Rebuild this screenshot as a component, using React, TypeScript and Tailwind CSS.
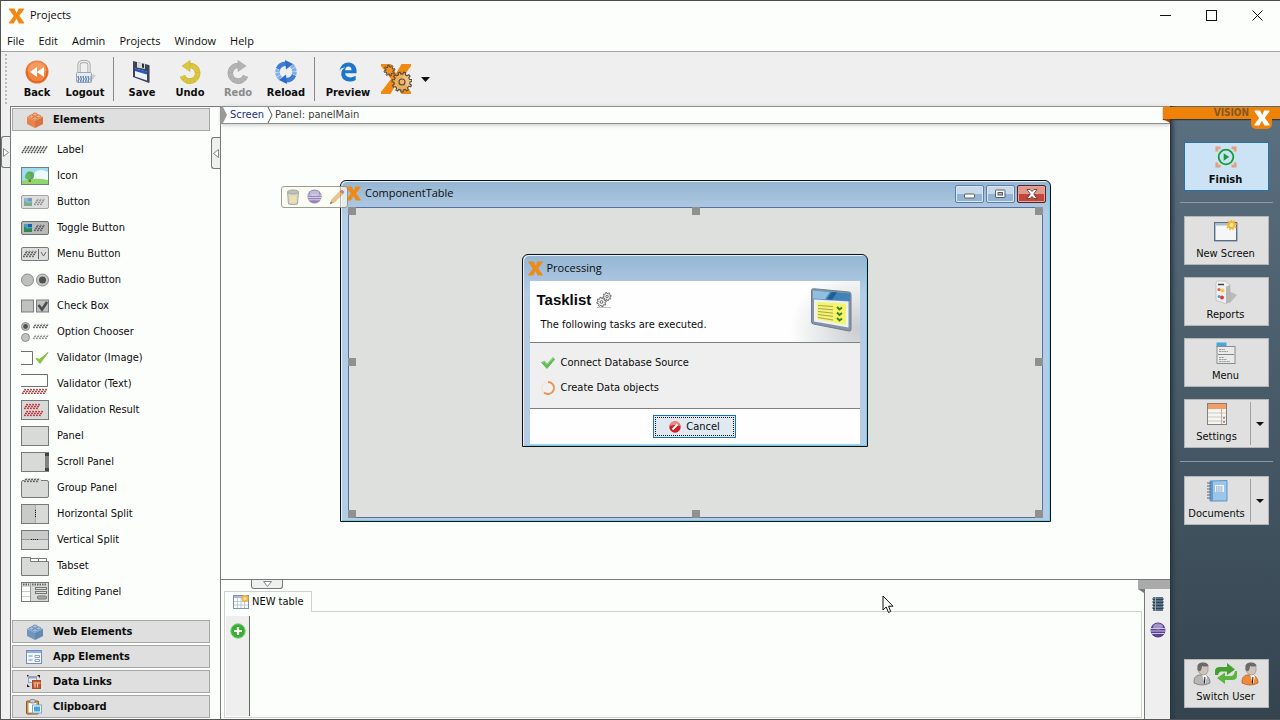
import React from "react";

type IconProps = { className?: string };

function XLogo({ className = "" }: IconProps) {
  return (
    <svg viewBox="0 0 16 16" className={className} aria-hidden="true">
      <path
        d="M0.5 0.5H6L8.200 5L10.200 0.500H15.500V1.500L10.800 7.800L15.600 14.500V15.500H10.400L7.900 10.700L5.300 15.500H0.400V14.500L5.200 8L0.500 1.500Z"
        fill="currentColor"
      />
    </svg>
  );
}

function Hatch({ x, y, w, h = 4, color = "#555" }: { x: number; y: number; w: number; h?: number; color?: string }) {
  const count = Math.floor((w - h * 0.6) / 3) + 1;
  return (
    <g stroke={color} strokeWidth="1.6" strokeDasharray="1.6 0.5">
      {Array.from({ length: count }, (_, i) => (
        <line key={i} x1={x + i * 3 + 0.5} y1={y + h} x2={x + i * 3 + 0.5 + h * 0.6} y2={y} />
      ))}
    </g>
  );
}

function Box() {
  return <rect x="0.5" y="0.5" width="27" height="19" fill="#d8dad8" stroke="#777a7a" />;
}

function Picture({ faded = false }: { faded?: boolean }) {
  return (
    <g opacity={faded ? 0.55 : 1}>
      <rect x="3" y="6" width="8" height="8" fill="#4a9bd0" />
      <path d="M3 14V8l3 3 5-1v4z" fill="#2d8a4a" />
      <rect x="7" y="6" width="4" height="3" fill="#245f9c" />
    </g>
  );
}

const elements: { name: string; art: React.ReactNode }[] = [
  { name: "Label", art: <Hatch x={0.5} y={6} w={27} h={7} /> },
  {
    name: "Icon",
    art: (
      <>
        <rect x="0.5" y="1.5" width="27" height="17" fill="#9edcf0" stroke="#6d7f7f" />
        <path d="M14 6q5-4 13 0v8H12z" fill="#eef9fb" />
        <path d="M1 15q12-4 26-1v4H1z" fill="#8fd66c" />
        <path d="M8 10h2v6H7.500z" fill="#8a6a35" />
        <circle cx="9" cy="9.500" r="4" fill="#5bab52" />
        <circle cx="7" cy="10.500" r="3" fill="#66b75c" />
      </>
    ),
  },
  {
    name: "Button",
    art: (
      <>
        <rect x="0.5" y="3.5" width="27" height="13" rx="1.500" fill="#dcdddc" stroke="#a2a5a4" />
        <Picture faded />
        <Hatch x={13} y={7} w={12} h={6} color="#8c8c8c" />
      </>
    ),
  },
  {
    name: "Toggle Button",
    art: (
      <>
        <rect x="0.5" y="3.5" width="27" height="13" rx="1.500" fill="#b9bbba" stroke="#6f7271" />
        <Picture />
        <Hatch x={13} y={7} w={12} h={6} />
      </>
    ),
  },
  {
    name: "Menu Button",
    art: (
      <>
        <rect x="0.5" y="3.5" width="27" height="13" rx="1.500" fill="#dcdddc" stroke="#777a79" />
        <Hatch x={2} y={7} w={13} h={6} />
        <path d="M17.500 5v10" stroke="#666" />
        <path d="M20 8l2.500 4L25 8" fill="none" stroke="#666" />
      </>
    ),
  },
  {
    name: "Radio Button",
    art: (
      <>
        <circle cx="6.500" cy="10" r="6" fill="#bdbfbe" stroke="#8a8d8c" />
        <circle cx="21.500" cy="10" r="6" fill="#c5c7c6" stroke="#8a8d8c" />
        <circle cx="21.500" cy="10" r="3.500" fill="#505251" />
      </>
    ),
  },
  {
    name: "Check Box",
    art: (
      <>
        <rect x="0.5" y="4" width="12" height="12" fill="#bfc1c0" stroke="#7b7e7d" />
        <rect x="15.500" y="4" width="12" height="12" fill="#bfc1c0" stroke="#7b7e7d" />
        <path d="M17.500 9l3.500 4.500L26 6" fill="none" stroke="#4c4e4d" strokeWidth="2.600" />
      </>
    ),
  },
  {
    name: "Option Chooser",
    art: (
      <>
        <circle cx="4.500" cy="4.500" r="4" fill="#c2c4c3" stroke="#8a8d8c" />
        <circle cx="4.500" cy="4.500" r="2.400" fill="#505251" />
        <circle cx="4.500" cy="15.500" r="4" fill="#c2c4c3" stroke="#8a8d8c" />
        <Hatch x={12} y={2} w={15} h={4} />
        <Hatch x={12} y={13} w={15} h={4} color="#888" />
      </>
    ),
  },
  {
    name: "Validator (Image)",
    art: (
      <>
        <path d="M0 3.500h11.500v13H0" fill="none" stroke="#6c6f6e" />
        <path d="M15 10.500l4 5 8-11-8.200 6.800z" fill="#86c440" stroke="#86c440" />
      </>
    ),
  },
  {
    name: "Validator (Text)",
    art: (
      <>
        <path d="M0 0.500h26.500v12H0" fill="none" stroke="#6c6f6e" />
        <Hatch x={1} y={15} w={25} h={5} color="#a3282a" />
      </>
    ),
  },
  {
    name: "Validation Result",
    art: (
      <>
        <Box />
        <Hatch x={3} y={4} w={17} h={5} color="#c22429" />
        <Hatch x={3} y={11} w={20} h={5} color="#c22429" />
      </>
    ),
  },
  { name: "Panel", art: <Box /> },
  {
    name: "Scroll Panel",
    art: (
      <>
        <Box />
        <rect x="24" y="0" width="4" height="20" fill="#808281" />
        <rect x="24" y="1" width="4" height="3" fill="#414342" />
        <rect x="24" y="16" width="4" height="3" fill="#414342" />
      </>
    ),
  },
  {
    name: "Group Panel",
    art: (
      <>
        <rect x="0.5" y="2.500" width="27" height="17" rx="1.500" fill="#d8dad8" stroke="#777a7a" />
        <rect x="3" y="1" width="17" height="4" fill="#d8dad8" />
        <Hatch x={3} y={0} w={17} h={4} />
      </>
    ),
  },
  {
    name: "Horizontal Split",
    art: (
      <>
        <Box />
        <rect x="1" y="1" width="13" height="18" fill="#c9cbca" />
        <path d="M14.500 1v18" stroke="#aaa" />
        <path d="M14.500 6v8" stroke="#222" strokeDasharray="1 1" />
      </>
    ),
  },
  {
    name: "Vertical Split",
    art: (
      <>
        <Box />
        <rect x="1" y="1" width="26" height="8" fill="#c9cbca" />
        <path d="M1 9.500h26" stroke="#999" />
        <path d="M10 9.500h8" stroke="#222" strokeDasharray="1 1" />
      </>
    ),
  },
  {
    name: "Tabset",
    art: (
      <>
        <path d="M0.500 1.500h9v4h18v14H0.500z" fill="#d8dad8" stroke="#777a7a" />
        <path d="M9.500 2.500h8v3M17.500 2.500h8v3" fill="none" stroke="#777a7a" />
      </>
    ),
  },
  {
    name: "Editing Panel",
    art: (
      <>
        <Box />
        <rect x="1" y="5" width="8" height="14" fill="#fff" />
        <path d="M1 9.500h8M1 14.500h8" stroke="#ccc" />
        <path d="M2 2.500h6M11 2.500h15" stroke="#666" strokeWidth="2" strokeDasharray="1.500 1" />
        <rect x="14.500" y="5.500" width="11" height="2" fill="#ddd" stroke="#777" />
        <rect x="14.500" y="9.500" width="11" height="2" fill="#ddd" stroke="#777" />
        <rect x="16.500" y="14" width="9" height="3" rx="1" fill="#aaa" stroke="#777" />
        <path d="M9.500 1v18" stroke="#999" />
      </>
    ),
  },
];

function Brick({ light, mid, dark }: { light: string; mid: string; dark: string }) {
  return (
    <svg viewBox="0 0 18 16" className="h-4 w-[18px]" aria-hidden="true">
      <path d="M1 5l8-4 8 4v7l-8 4-8-4z" fill={mid} />
      <path d="M1 5l8-4 8 4-8 4z" fill={light} />
      <path d="M9 9l8-4v7l-8 4z" fill={dark} opacity="0.6" />
      <ellipse cx="5.500" cy="4.500" rx="2.300" ry="1.500" fill={light} stroke={dark} strokeWidth="0.700" />
      <ellipse cx="12.500" cy="4.500" rx="2.300" ry="1.500" fill={light} stroke={dark} strokeWidth="0.700" />
      <ellipse cx="9" cy="2.500" rx="2.300" ry="1.500" fill={light} stroke={dark} strokeWidth="0.700" />
      <ellipse cx="9" cy="6.500" rx="2.300" ry="1.500" fill={light} stroke={dark} strokeWidth="0.700" />
    </svg>
  );
}

function AppFormIcon() {
  return (
    <svg viewBox="0 0 16 14" className="h-[14px] w-4" aria-hidden="true">
      <rect x="0.5" y="0.5" width="15" height="13" fill="#f3f7fc" stroke="#6d8fbd" />
      <rect x="1" y="1" width="14" height="2" fill="#8fb0dc" />
      <path d="M2.500 6h4M2.500 10h4" stroke="#6d8fbd" />
      <path d="M9 5.500h4.500v2H9zM9 9.500h4.500v2H9z" fill="#fff" stroke="#6d8fbd" strokeWidth="0.800" />
    </svg>
  );
}

function DataLinkIcon() {
  return (
    <svg viewBox="0 0 16 14" className="h-[14px] w-4" aria-hidden="true">
      <rect x="2.500" y="1.500" width="8" height="6" fill="#e6eef7" stroke="#8fa5bd" />
      <path d="M2 2.500h9" stroke="#8fa5bd" strokeWidth="2" />
      <rect x="6.500" y="5.500" width="8" height="8" fill="#c9562e" stroke="#b04a26" />
      <path d="M9 8.500v4M11.500 8.500v4M7.500 8h7" stroke="#f6d5c4" />
      <path d="M1 0h2L1 2zM11 0h3v3zM1 9v3h3z" fill="#222" />
    </svg>
  );
}

function ClipboardIcon() {
  return (
    <svg viewBox="0 0 16 16" className="h-4 w-4" aria-hidden="true">
      <rect x="0.5" y="2" width="12" height="13" rx="1" fill="#c98f47" stroke="#8b5a22" />
      <rect x="2.500" y="4" width="8" height="9.500" fill="#fff" />
      <rect x="4" y="0.500" width="5" height="3.500" rx="1" fill="#c8cdd2" stroke="#7b8087" strokeWidth="0.800" />
      <rect x="6.500" y="6" width="9" height="8" fill="#fff" stroke="#7ca6c9" />
      <rect x="8" y="7.500" width="6" height="5" fill="#42a6dd" />
    </svg>
  );
}

function AccordionHeader({ icon, label }: { icon: React.ReactNode; label: string }) {
  return (
    <button
      type="button"
      className="flex h-[23px] w-full shrink-0 items-center border border-[#a6a7a6] bg-[#dedfde] pl-[13px] text-left text-[11px] font-bold leading-[14px]"
    >
      <span className="flex w-[27px] items-center">{icon}</span>
      {label}
    </button>
  );
}

function BackIcon() {
  return (
    <svg viewBox="0 0 24 24" className="h-6 w-6" aria-hidden="true">
      <circle cx="12" cy="12" r="11.500" fill="#ea7430" />
      <circle cx="12" cy="12" r="10" fill="#f0863f" stroke="#d65d1e" />
      <path d="M2 11a10 10 0 0 1 20 0q-10 4-20 0z" fill="#f6a871" opacity="0.6" />
      <path d="M12 7v10l-7-5zM19 7v10l-7-5z" fill="#fff" />
    </svg>
  );
}

function LockIcon() {
  return (
    <svg viewBox="0 0 24 24" className="h-6 w-6" aria-hidden="true">
      <path d="M15 14l8 1-5 7h-5z" fill="#ccc" />
      <path d="M6 13V4.500q0-3 5-3t5 3V13" fill="none" stroke="#999" strokeWidth="3" />
      <path d="M6 13V4.500q0-3 5-3t5 3V13" fill="none" stroke="#ededed" strokeWidth="1.500" />
      <rect x="3.500" y="12.500" width="15" height="10" rx="1" fill="#e6ebf0" stroke="#9aa5b0" />
      <path d="M4.500 17h13M5 19h13M4.500 21h13" stroke="#466fa3" strokeWidth="1.500" strokeDasharray="1.500 1" />
    </svg>
  );
}

function SaveIcon() {
  return (
    <svg viewBox="0 0 24 24" className="h-6 w-6" aria-hidden="true">
      <path d="M3 1l16 4v18L3 17z" fill="#3d4454" />
      <path d="M7 2l8 2v5L7 7.500z" fill="#d7dbe0" />
      <path d="M12 3.500l2 .5v4l-2-.5z" fill="#2a2e38" />
      <path d="M5 8.500l12 3v9l-12-4z" fill="#eef3fb" />
      <path d="M5 8.500l12 3v3l-12-3.500z" fill="#2156c8" />
      <path d="M19 5l1 .5v17l-1 .5z" fill="#8d929c" />
    </svg>
  );
}

function TurnIcon({ color, edge, flip = false }: { color: string; edge: string; flip?: boolean }) {
  return (
    <svg viewBox="0 0 24 24" className="h-6 w-6" aria-hidden="true">
      <g transform={flip ? "translate(24 0) scale(-1 1)" : undefined}>
        <path d="M11 5.500a7.800 7.800 0 1 1-6.500 10.500" fill="none" stroke={edge} strokeWidth="5.600" />
        <path
          d="M11 5.500a7.800 7.800 0 1 1-6.500 10.500"
          fill="none"
          stroke={color}
          strokeWidth="4.600"
          strokeDasharray="12 0.500 4 0.500 3.500 0.500 3 0.500 3 0.500 3 0.500"
        />
        <path d="M4 6L12 0.500v11z" fill={color} stroke={edge} strokeWidth="0.600" />
      </g>
    </svg>
  );
}

function ReloadIcon() {
  return (
    <svg viewBox="0 0 24 24" className="h-6 w-6" aria-hidden="true">
      <path d="M3.900 9A8.600 8.600 0 0 1 12 3.800" fill="none" stroke="#3f7ed8" strokeWidth="4.500" />
      <path d="M20.100 15A8.600 8.600 0 0 1 12 20.200" fill="none" stroke="#3f7ed8" strokeWidth="4.500" />
      <path d="M17.500 5.500a8.600 8.600 0 0 1 2.600 9" fill="none" stroke="#7fb0ee" strokeWidth="4.500" strokeDasharray="3 0.500" />
      <path d="M6.500 18.500a8.600 8.600 0 0 1-2.600-9" fill="none" stroke="#7fb0ee" strokeWidth="4.500" strokeDasharray="3 0.500" />
      <path d="M11 0l8 4-7 5.500z" fill="#2f6bc8" />
      <path d="M13 24l-8-4 7-5.500z" fill="#2f6bc8" />
    </svg>
  );
}

function BrowserIcon() {
  return (
    <svg viewBox="0 0 20 22" className="h-5 w-[18px]" aria-hidden="true">
      <path
        d="M0.500 9.500C2 3.500 5.500 0.500 10.500 0.500c5.500 0 9 4 9 9.500v2.500H6.800c.2 3 2.600 4.500 5.700 4.500 2.300 0 4.500-.7 6-1.700v4.500c-2 1.100-4.500 1.700-7 1.700-5.700 0-9-3.700-9-8.500 0-3.200 1.600-5.900 4.700-7.300C3.900 6.200 1.900 7.200.5 9.500zM6.900 9h7c0-2.600-1.200-4-3.400-4S7.100 6.500 6.900 9z"
        fill="#1d76cc"
      />
    </svg>
  );
}

function gearPath(cx: number, cy: number, outer: number, inner: number, teeth: number) {
  const points: string[] = [];
  for (let i = 0; i < teeth; i++) {
    const start = (i / teeth) * Math.PI * 2;
    const step = (Math.PI * 2) / teeth;
    const corners: [number, number][] = [
      [inner, 0],
      [inner, 0.45],
      [outer, 0.55],
      [outer, 0.9],
    ];
    corners.forEach(([radius, part]) => {
      const angle = start + step * part;
      points.push(`${(cx + radius * Math.cos(angle)).toFixed(2)} ${(cy + radius * Math.sin(angle)).toFixed(2)}`);
    });
  }
  return `M${points.join("L")}Z`;
}

function GearLogo() {
  return (
    <svg viewBox="0 0 32 32" className="h-8 w-8" aria-hidden="true">
      <path d="M1 1h10l5 9.500L21.500 1H31v2l-9.500 13L31 29v2H21.500l-5.500-9.500L10.500 31H1v-2l10-13L1 3z" fill="#f08a14" />
      <g stroke="#4f4a42" fill="#f0b56a" fillOpacity="0.8">
        <path d={gearPath(22, 19, 10, 8, 11)} strokeWidth="1.100" />
        <circle cx="22" cy="19" r="3" strokeWidth="1.100" />
        <path d={gearPath(9.500, 7.500, 5.500, 3.600, 8)} fillOpacity="0.2" />
      </g>
    </svg>
  );
}

function ToolButton({ label, icon, disabled = false }: { label: string; icon: React.ReactNode; disabled?: boolean }) {
  return (
    <button
      type="button"
      disabled={disabled}
      className="flex w-12 shrink-0 flex-col items-center gap-0.5 whitespace-nowrap pt-px text-[11px] font-bold leading-[14px] disabled:text-[#8b8b8b]"
    >
      <span className="flex h-6 items-center">{icon}</span>
      {label}
    </button>
  );
}

function Separator() {
  return <span className="mx-1 h-11 w-px shrink-0 bg-[#888a89]" />;
}

function TitleBar() {
  return (
    <header className="flex h-[30px] shrink-0 items-center border-t border-[#4b4b4b] pl-[7px] font-['Open_Sans','Noto_Sans',sans-serif] text-[11px]">
      <XLogo className="h-4 w-[17px] text-[#f08a14]" />
      <h1 className="ml-[5px] grow">Projects</h1>
      <button type="button" aria-label="Minimize" className="flex w-[46px] justify-center">
        <svg viewBox="0 0 11 11" className="h-[11px] w-[11px]"><path d="M0 5.500h11" stroke="#111" /></svg>
      </button>
      <button type="button" aria-label="Maximize" className="flex w-[46px] justify-center">
        <svg viewBox="0 0 11 11" className="h-[11px] w-[11px]"><rect x="0.500" y="0.500" width="10" height="10" fill="none" stroke="#111" /></svg>
      </button>
      <button type="button" aria-label="Close" className="flex w-[46px] justify-center">
        <svg viewBox="0 0 11 11" className="h-[11px] w-[11px]"><path d="M0.500 0.500l10 10M10.500 0.500l-10 10" stroke="#111" /></svg>
      </button>
    </header>
  );
}

function MenuBar() {
  return (
    <nav className="flex h-[22px] shrink-0 items-center gap-3.5 border-b border-[#a3a5a4] pl-1.5 pt-0.5 font-['Open_Sans','Noto_Sans',sans-serif] text-[11px]">
      {["File", "Edit", "Admin", "Projects", "Window", "Help"].map((m) => (
        <button key={m} type="button">{m}</button>
      ))}
    </nav>
  );
}

function Toolbar() {
  return (
    <div role="toolbar" className="flex h-[54px] shrink-0 items-center bg-[#eeefee] pl-1">
      <span className="mr-1.5 h-[50px] border-l-2 border-dotted border-[#bbb]" />
      <ToolButton label="Back" icon={<BackIcon />} />
      <ToolButton label="Logout" icon={<LockIcon />} />
      <Separator />
      <ToolButton label="Save" icon={<SaveIcon />} />
      <ToolButton label="Undo" icon={<TurnIcon color="#dcc63c" edge="#c4ae38" />} />
      <ToolButton label="Redo" icon={<TurnIcon color="#b3b4b3" edge="#a2a3a2" flip />} disabled />
      <ToolButton label="Reload" icon={<ReloadIcon />} />
      <Separator />
      <span className="w-[5px]" />
      <ToolButton label="Preview" icon={<BrowserIcon />} />
      <button type="button" aria-label="Application" className="ml-2"><GearLogo /></button>
      <button type="button" aria-label="Application options" className="ml-[9px]">
        <svg viewBox="0 0 9 5" className="h-[5px] w-[9px]"><path d="M0 0h9L4.500 5z" fill="#111" /></svg>
      </button>
    </div>
  );
}

function ElementsPanel() {
  return (
    <aside className="relative flex w-[211px] shrink-0 flex-col border-x border-t border-[#777978] pl-px pr-2.5 pt-px">
      <AccordionHeader icon={<Brick light="#f5b183" mid="#e8834b" dark="#cf6a35" />} label="Elements" />
      <ul className="grow pl-[9px] pt-1.5">
        {elements.map((e) => (
          <li key={e.name}>
            <button type="button" className="flex h-[26px] items-center gap-2 text-[11px] leading-[14px]">
              <svg viewBox="0 0 28 20" className="h-5 w-7" aria-hidden="true">{e.art}</svg>
              {e.name}
            </button>
          </li>
        ))}
      </ul>
      <div className="flex flex-col gap-0.5 pb-px">
        <AccordionHeader icon={<Brick light="#a9c3df" mid="#7396bd" dark="#5c80aa" />} label="Web Elements" />
        <AccordionHeader icon={<AppFormIcon />} label="App Elements" />
        <AccordionHeader icon={<DataLinkIcon />} label="Data Links" />
        <AccordionHeader icon={<ClipboardIcon />} label="Clipboard" />
      </div>
      <button
        type="button"
        aria-label="Collapse elements"
        className="absolute right-0 top-[30px] flex h-8 w-[9px] items-center justify-center rounded-l-[3px] border border-r-0 border-[#777978] bg-[#eeefee]"
      >
        <svg viewBox="0 0 6 9" className="h-[9px] w-1.5"><path d="M5.500 0.500v8L0.500 4.500z" fill="#fff" stroke="#888" /></svg>
      </button>
    </aside>
  );
}

function Breadcrumb() {
  return (
    <nav className="relative z-10 flex h-[18px] shrink-0 items-center border-y border-[#8e908f] bg-[#fcfefc] text-[11px] leading-[14px] text-[#3c3c3c] shadow-[0_1px_4px_#c4c4c4]">
      <svg viewBox="0 0 6 16" className="h-4 w-1.5" aria-hidden="true"><path d="M0 0h2l4 8-4 8H0z" fill="#999" /></svg>
      <a href="#screen" className="ml-[3px] text-[#1c2f80]">Screen</a>
      <svg viewBox="0 0 6 16" className="ml-[3px] mr-0.5 h-4 w-1.5" aria-hidden="true"><path d="M1 0l4 8-4 8" fill="none" stroke="#555" /></svg>
      <span>Panel: panelMain</span>
    </nav>
  );
}

function SphereIcon({ className = "" }: IconProps) {
  return (
    <svg viewBox="0 0 16 16" className={className} aria-hidden="true">
      <circle cx="8" cy="8" r="7.500" fill="#5b4090" />
      <ellipse cx="8" cy="4.500" rx="5" ry="3" fill="#a493c8" />
      <path d="M1 6.500h14M0.500 9h15M1.500 11.500h13" stroke="#cfc5e6" strokeWidth="1" />
    </svg>
  );
}

function SelectionTools() {
  return (
    <div className="absolute -left-[60px] top-[5px] flex h-[22px] w-[67px] items-center gap-[7px] rounded-[3px] border border-[#8f9483] bg-[#fcfdf3]/80 px-1 opacity-90">
      <button type="button" aria-label="Delete" className="opacity-80">
        <svg viewBox="0 0 14 16" className="h-4 w-3.5">
          <path d="M1.500 3h11l-1 12q-4.500 1.500-9 0z" fill="#c9cac0" stroke="#888a80" />
          <rect x="4" y="6.500" width="6" height="7" fill="#ecd48c" />
          <ellipse cx="7" cy="3" rx="5.500" ry="2" fill="#a9aba0" stroke="#888a80" />
        </svg>
      </button>
      <button type="button" aria-label="Event" className="opacity-70"><SphereIcon className="h-[15px] w-[15px]" /></button>
      <button type="button" aria-label="Edit" className="opacity-80">
        <svg viewBox="0 0 16 16" className="h-4 w-4">
          <path d="M1 15l2-4.500L12 1.500l2.500 2.500L5.500 13z" fill="#e8b45c" stroke="#b98840" strokeWidth="0.700" />
          <path d="M11 2.500l2-2 2.500 2.500-2 2z" fill="#d65548" />
          <path d="M1 15l1-2.500L3.500 14z" fill="#444" />
        </svg>
      </button>
    </div>
  );
}

function WindowControls() {
  const base = "flex h-[18px] w-[29px] items-center justify-center rounded-[2px] border border-[#5f7fa3] inset-shadow-[0_0_0_1px_#d8e6f3]";
  const blue = "bg-linear-to-b from-[#c6daec] from-50% to-[#94b4d3] to-50%";
  return (
    <div className="-mr-[3px] ml-auto flex gap-0.5 pt-px">
      <button type="button" aria-label="Minimize window" className={`${base} ${blue}`}>
        <svg viewBox="0 0 11 12" className="h-3 w-[11px]"><rect x="0.500" y="6" width="10" height="4" rx="0.500" fill="#fff" stroke="#5a5f67" /></svg>
      </button>
      <button type="button" aria-label="Maximize window" className={`${base} ${blue}`}>
        <svg viewBox="0 0 11 10" className="h-2.5 w-[11px]">
          <rect x="0.500" y="1" width="9.500" height="7.500" rx="0.500" fill="#fff" stroke="#5a5f67" />
          <rect x="3" y="3.500" width="4.500" height="2.500" fill="#9fbad5" stroke="#5a5f67" />
        </svg>
      </button>
      <button
        type="button"
        aria-label="Close window"
        className="flex h-[18px] w-[29px] items-center justify-center rounded-[2px] border border-[#54202a] bg-linear-to-b from-[#e09a8c] from-50% to-[#c0473a] to-50% inset-shadow-[0_0_0_1px_#e3a79c]"
      >
        <svg viewBox="0 0 12 10" className="h-2.5 w-3">
          <path d="M1 0.500h3l2 2 2-2h3L7.700 5 11 9.500H8L6 7.500l-2 2H1L4.300 5z" fill="#fff" stroke="#5a3030" strokeWidth="0.800" />
        </svg>
      </button>
    </div>
  );
}

const handle = "absolute h-2 w-2 bg-[#8f908f]";

function ComponentWindow() {
  return (
    <section className="relative flex h-[342px] w-[711px] flex-col rounded-t-[6px] border border-[#111] bg-linear-to-b from-[#94b5d2] to-[#b4cde6] to-10% px-[7px] pb-[3px] shadow-[inset_1px_1px_0_#e4f0fa,inset_-1px_-1px_0_#6fd0ea]">
      <div className="flex h-[25px] shrink-0 items-center text-[11px]">
        <XLogo className="-ml-0.5 h-[15px] w-[15px] text-[#f08a14]" />
        <h2 className="ml-1 font-['Open_Sans','Noto_Sans',sans-serif]">ComponentTable</h2>
        <WindowControls />
      </div>
      <div className="relative mt-px grow border border-[#5a6ea0] bg-[#dee0de]">
        <span className={`${handle} -left-px -top-px`} />
        <span className={`${handle} -top-px left-1/2 -translate-x-1/2`} />
        <span className={`${handle} -right-px -top-px`} />
        <span className={`${handle} -left-px top-1/2 -translate-y-1/2`} />
        <span className={`${handle} -right-px top-1/2 -translate-y-1/2`} />
        <span className={`${handle} -bottom-px -left-px`} />
        <span className={`${handle} -bottom-px left-1/2 -translate-x-1/2`} />
        <span className={`${handle} -bottom-px -right-px`} />
      </div>
      <SelectionTools />
    </section>
  );
}

function TaskArt() {
  return (
    <svg viewBox="0 0 44 48" className="h-12 w-11" aria-hidden="true">
      <path d="M1.500 3.500q0-2 2-1.800L39 5q2 .3 2 2.200v35q0 2.300-2 1.800L3.500 37q-2-.4-2-2z" fill="#8494a4" stroke="#6f7f90" />
      <path d="M4 12.500l34.500 2v26L4 34.500z" fill="#eef2f2" />
      <path d="M3 3.500l37 3v7.500L3 11.500z" fill="#3f83b9" />
      <path d="M3 3.500l17 1.400-5 7.400-12-.8z" fill="#8fc0e2" />
      <path d="M22 5l5 .5-5 7.200-5-.4z" fill="#1f5f98" />
      <path d="M7 15l29 1.500V38L7 32z" fill="#f5f46a" />
      <path d="M8 18.500l15 1M8 21.500l15 1.300M8 24.500l15 1.600M8 27.500l15 1.900M8 30.500l15 2.500" stroke="#a8a259" />
      <path d="M27 20l2.500 2.500L32 20.500M27 25.500l2.500 2.500 2.500-2M27 31l2.500 2.500 2.500-2" fill="none" stroke="#3c7d28" strokeWidth="1.800" />
    </svg>
  );
}

function ProcessingDialog() {
  return (
    <section
      role="dialog"
      aria-labelledby="processing-title"
      className="flex w-[346px] flex-col rounded-t-[6px] border border-[#111] bg-linear-to-b from-[#94b5d2] to-[#b4cde6] to-20% px-[7px] pb-0.5 shadow-[inset_1px_1px_0_#e4f0fa,inset_-1px_-1px_0_#6fd0ea]"
    >
      <div className="flex h-[26px] items-center text-[11px]">
        <XLogo className="-ml-0.5 h-[15px] w-[15px] text-[#f08a14]" />
        <h2 id="processing-title" className="ml-1 font-['Open_Sans','Noto_Sans',sans-serif]">Processing</h2>
      </div>
      <div className="flex h-[61px] justify-between bg-[#fdfefd] bg-[radial-gradient(ellipse_70px_60px_at_100%_80%,#c9ccd0,#fdfefd)]">
        <div className="pl-[7px] pt-2">
          <h3 className="flex items-center gap-[5px] font-['Liberation_Sans',sans-serif] text-[15px] font-bold leading-[22px]">
            Tasklist
            <svg viewBox="0 0 16 16" className="h-4 w-4" aria-hidden="true">
              <g fill="#f3f3f3" stroke="#5c5c5c">
                <path d={gearPath(5.5, 10, 4.8, 3.6, 8)} strokeWidth="0.900" />
                <circle cx="5.500" cy="10" r="1.400" strokeWidth="0.900" />
                <path d={gearPath(11, 4.6, 4.2, 3.1, 8)} strokeWidth="0.900" />
                <circle cx="11" cy="4.600" r="1.200" strokeWidth="0.900" />
              </g>
              <path d="M1 15.500h14" stroke="#c5c5c5" />
            </svg>
          </h3>
          <p className="pl-1 pt-[7px] text-[11px] leading-[14px]">The following tasks are executed.</p>
        </div>
        <div className="pr-1.5 pt-[6px]"><TaskArt /></div>
      </div>
      <ul className="flex flex-col gap-[9px] border-y border-[#7f8180] bg-[#eeefee] px-[11px] py-3 text-[11px] leading-4">
        <li className="flex items-center gap-1.5">
          <svg viewBox="0 0 14 12" className="h-3 w-3.5" aria-hidden="true">
            <path d="M0.500 5.500L3.500 4l2.500 3L12 0.500l1.500 2L6 11.500z" fill="#5cbf50" stroke="#4aa844" strokeWidth="0.600" />
            <path d="M1.500 5.500L3.500 4.500l2.500 3L12 1.200" fill="none" stroke="#a5dd9c" />
          </svg>
          Connect Database Source
        </li>
        <li className="flex items-center gap-1.5">
          <svg viewBox="0 0 14 14" className="h-3.5 w-3.5" aria-hidden="true">
            <path d="M7 1a6 6 0 1 1-4 10.500" fill="none" stroke="#ea9254" strokeWidth="1.800" />
            <path d="M3 11.500A6 6 0 0 1 7 1" fill="none" stroke="#f8e0cf" strokeWidth="1.200" />
          </svg>
          Create Data objects
        </li>
      </ul>
      <div className="flex h-[35px] items-center justify-center bg-[#fdfefd]">
        <button type="button" className="flex h-[23px] w-[83px] items-center border border-[#1a72b8] bg-[#e0e8f0] p-px text-[11px] leading-[14px]">
          <span className="flex h-full w-full items-center justify-center gap-[5px] border border-dotted border-[#111]">
            <svg viewBox="0 0 12 12" className="h-3 w-3" aria-hidden="true">
              <circle cx="6" cy="6" r="5.700" fill="#cf1f24" />
              <path d="M1 5a5 5 0 0 1 10 0q-5-2-10 0z" fill="#e88a86" />
              <path d="M3.500 8.500l5-5" stroke="#fff" strokeWidth="2" />
            </svg>
            Cancel
          </span>
        </button>
      </div>
    </section>
  );
}

function Canvas() {
  return (
    <main className="relative flex min-h-0 grow items-center justify-center border-b border-[#777978] bg-[#fcfefc] pb-0.5">
      <ComponentWindow />
      <div className="absolute inset-0 flex items-center justify-center pb-0.5 pr-0.5"><ProcessingDialog /></div>
    </main>
  );
}

function TableIcon() {
  return (
    <svg viewBox="0 0 16 14" className="h-3.5 w-4" aria-hidden="true">
      <rect x="0.500" y="0.500" width="15" height="13" fill="#fdfefe" stroke="#7f93ad" />
      <rect x="1" y="1" width="14" height="2" fill="#a9bcd3" />
      <path d="M1 6.500h14M1 10h14M4.500 3v10M8 3v10M11.500 3v10" stroke="#b7c6d9" strokeWidth="0.900" />
      <circle cx="12" cy="3.500" r="3.500" fill="#f3b73a" />
      <circle cx="12" cy="3.500" r="1.500" fill="#fbe3a0" />
    </svg>
  );
}

function TablePanel() {
  return (
    <section className="relative flex h-[139px] shrink-0">
      <div className="flex min-w-0 grow flex-col pb-px pl-[3px] pr-0.5 pt-[11px]">
        <div role="tablist" className="flex h-[21px] shrink-0">
          <button
            type="button"
            role="tab"
            aria-selected="true"
            className="flex items-center gap-[3px] border-x border-t border-[#d0d1d0] pl-2 pr-[7px] text-[11px] leading-[14px]"
          >
            <TableIcon />
            NEW table
          </button>
          <span className="grow border-b border-[#d0d1d0]" />
        </div>
        <div className="flex grow border-x border-b border-[#d0d1d0] pb-px pl-px pt-1">
          <div className="flex w-6 flex-col items-center border-r border-[#666] bg-[#eeefee] pt-[7px]">
            <button type="button" aria-label="Add row">
              <svg viewBox="0 0 16 16" className="h-4 w-4">
                <circle cx="8" cy="8" r="7.300" fill="#37b034" stroke="#8fd08d" />
                <path d="M8 4v8M4 8h8" stroke="#fff" strokeWidth="2.200" />
              </svg>
            </button>
          </div>
        </div>
      </div>
      <div className="relative flex w-[26px] shrink-0 flex-col items-center gap-2.5 border-l border-[#777978] bg-[#eeefee] pt-4">
        <div className="absolute -left-[7px] right-0 top-0 h-[9px] bg-[#a9aaa9]" />
        <svg viewBox="0 0 6 4" className="absolute -left-[7px] top-[9px] h-1 w-1.5" aria-hidden="true"><path d="M0 0h6v4z" fill="#777" /></svg>
        <button type="button" aria-label="Data sources">
          <svg viewBox="0 0 14 16" className="h-4 w-3.5">
            <rect x="2" y="1" width="10" height="14" fill="#5b7288" />
            <path d="M2 3.500h10M2 6.500h10M2 9.500h10M2 12.500h10" stroke="#2f4052" />
            <path d="M4.500 1v14" stroke="#8fb5a0" />
            <path d="M1.500 2v12M12.500 2v12" stroke="#99a3ab" strokeDasharray="2 1" />
          </svg>
        </button>
        <button type="button" aria-label="Events"><SphereIcon className="h-4 w-4" /></button>
      </div>
      <button
        type="button"
        aria-label="Collapse table panel"
        className="absolute left-[30px] top-0 flex h-[9px] w-8 items-center justify-center rounded-b-[3px] border border-t-0 border-[#777978] bg-[#eeefee]"
      >
        <svg viewBox="0 0 9 6" className="h-1.5 w-[9px]"><path d="M0.500 0.500h8L4.500 5.500z" fill="#fff" stroke="#888" /></svg>
      </button>
    </section>
  );
}

function FinishIcon() {
  return (
    <svg viewBox="0 0 24 24" className="h-[22px] w-6" aria-hidden="true">
      <path d="M2 6V2h4M18 2h4v4M22 18v4h-4M6 22H2v-4" fill="none" stroke="#e3a07a" strokeWidth="3" />
      <circle cx="12" cy="12" r="8" fill="none" stroke="#1b9c3c" strokeWidth="2" />
      <path d="M9.500 8v8l6-4z" fill="#1b9c3c" />
    </svg>
  );
}

function ScreenIcon() {
  return (
    <svg viewBox="0 0 24 22" className="h-[22px] w-6" aria-hidden="true">
      <rect x="0.700" y="2.700" width="22" height="18" fill="#f4f6f8" stroke="#5a6f85" strokeWidth="1.400" />
      <rect x="1.500" y="3.500" width="20.500" height="2" fill="#a9bccf" />
      <path d={gearPath(17.5, 5, 5.5, 4, 9)} fill="#f5b52e" />
      <circle cx="17.500" cy="5" r="2" fill="#fde9a8" />
    </svg>
  );
}

function ReportIcon() {
  return (
    <svg viewBox="0 0 22 24" className="h-6 w-[22px]" aria-hidden="true">
      <path d="M14 11l8 4-7 8z" fill="#b9bab9" />
      <path d="M1 3q0-2 2-2h7l5 4v17l-4 1.500L1 20.500z" fill="#eff0f2" stroke="#b4b6b8" strokeWidth="0.700" />
      <path d="M11 6.500L15 5v17l-4 1.500z" fill="#b4b6b9" />
      <path d="M3 4.500h6" stroke="#444" strokeWidth="1.500" />
      <circle cx="4" cy="9.500" r="1.600" fill="#e45a3a" />
      <circle cx="7.500" cy="10.500" r="2" fill="#f0c63a" />
      <circle cx="4" cy="16.500" r="1.500" fill="#5a9bd6" />
      <circle cx="7" cy="17.500" r="2" fill="#dc3c34" />
    </svg>
  );
}

function MenuIcon() {
  return (
    <svg viewBox="0 0 20 22" className="h-[22px] w-5" aria-hidden="true">
      <path d="M0.500 0.500h10V5H0.500z" fill="#45a9d6" />
      <rect x="1" y="4.500" width="18" height="17" fill="#e9eaea" stroke="#8a8d90" />
      <path d="M3 7.500h6M3 9.500h9M3 15.500h5M3 17.500h8M3 19.500h11" stroke="#999" strokeDasharray="2 0.600" />
      <path d="M2 12.500h16" stroke="#888" />
    </svg>
  );
}

function SettingsIcon() {
  return (
    <svg viewBox="0 0 20 22" className="h-[22px] w-5" aria-hidden="true">
      <rect x="0.500" y="0.500" width="19" height="21" fill="#f5f5f3" stroke="#8b7d72" />
      <rect x="1" y="1" width="18" height="5" fill="#f0a066" />
      <path d="M1 10h18M1 14h18M1 18h18" stroke="#c9c8c6" />
      <path d="M14.500 6v15" stroke="#d9a98a" />
      <path d="M16 15h2M16 19h2" stroke="#555" />
    </svg>
  );
}

function DocumentIcon() {
  return (
    <svg viewBox="0 0 22 22" className="h-[22px] w-[22px]" aria-hidden="true">
      <path d="M4 1l17 -.5V21H4z" fill="#9cc6e9" stroke="#5a94c2" />
      <path d="M4 1h3v20H4z" fill="#5f9bcc" />
      <path d="M1 3h4M1 6h4M1 9h4M1 12h4M1 15h4M1 18h4" stroke="#5a6670" />
      <rect x="9" y="5" width="9" height="7" fill="#eef5fb" />
      <path d="M10 7h7M10 9h7M10 11h7" stroke="#6f90ad" strokeDasharray="1.500 0.700" />
    </svg>
  );
}

function Person({ coat, shade }: { coat: string; shade: string }) {
  return (
    <svg viewBox="0 0 18 24" className="h-6 w-[18px]" aria-hidden="true">
      <path d="M1 21q-.5-7 5-8h5q6 1 6 8-8 4-16 0z" fill={coat} stroke={shade} strokeWidth="0.800" />
      <path d="M9 13h4l1 2-2 7-2-7z" fill="#fff" />
      <path d="M11.500 14.500l1 1-.7 6.500-1-1z" fill="#222" />
      <path d="M5 5q0-4 5-4t5 4v4q-1 4-4.500 4T5 9z" fill="#d0c3bb" stroke="#888" strokeWidth="0.600" />
      <path d="M4.500 8V4Q5 .5 10 .5t5.500 3.500Q11 5 9 4q0 4-2 5.500z" fill="#6a6a6a" />
    </svg>
  );
}

function SwitchUserIcon() {
  return (
    <span className="flex items-center gap-[3px]">
      <Person coat="#b5b6b5" shade="#777" />
      <svg viewBox="0 0 24 22" className="h-[22px] w-6" aria-hidden="true">
        <path d="M1 12V8q0-4 5-4h7V0l8 6.500-8 5.500V8.500H7q-2 0-3 3.500z" fill="#43a02c" />
        <path d="M23 8v5q0 4-5 4h-7v4L3 15l8-5.500V13h6q3 0 4-5z" fill="#5bb540" />
      </svg>
      <Person coat="#ef8a3c" shade="#b55f1e" />
    </span>
  );
}

function SideButton({ label, icon, active = false, split = false }: { label: string; icon: React.ReactNode; active?: boolean; split?: boolean }) {
  return (
    <div className={`flex h-[49px] shrink-0 border ${active ? "border-[#2671a8] bg-[#cbe3f4] font-bold" : "border-[#b3b6b6] bg-[#dfe0df]"}`}>
      <button type="button" className="flex min-w-0 grow flex-col items-center gap-0.5 whitespace-nowrap pr-0.5 pt-0.5 text-[11px] leading-[18px]">
        <span className="flex h-6 items-center">{icon}</span>
        {label}
      </button>
      {split && (
        <button type="button" aria-label={`${label} options`} className="my-0.5 flex w-[18px] shrink-0 items-center justify-center border-l border-[#9fa2a2]">
          <svg viewBox="0 0 8 4" className="h-1 w-2"><path d="M0 0h8L4 4z" fill="#111" /></svg>
        </button>
      )}
    </div>
  );
}

function VisionSidebar() {
  return (
    <aside className="relative z-20 flex w-[110px] shrink-0 flex-col border-l border-[#26343f] bg-linear-to-b from-[#5b7080] to-[#34444f] pb-[11px] pl-[13px] pr-[11px] pt-9 shadow-[inset_4px_0_4px_-2px_#2b3a45]">
      <div className="absolute -left-2 right-0 top-px h-3 bg-[#f08208] shadow-[0_1px_1px_#2b3a45]">
        <span className="absolute bottom-0 right-[31px] text-[10px] font-bold leading-3 text-[#80592a]">VISION</span>
        <span className="absolute right-2 top-0 flex h-[22px] w-[21px] items-center justify-center rounded-b-[5px] bg-[#f08208] text-white">
          <XLogo className="h-4 w-4" />
        </span>
      </div>
      <svg viewBox="0 0 7 4" className="absolute -left-2 top-[13px] h-1 w-[7px]" aria-hidden="true"><path d="M0 0h7v4z" fill="#a8400c" /></svg>
      <SideButton label="Finish" icon={<FinishIcon />} active />
      <hr className="-ml-1 -mr-1 my-[11px] mb-[13px] border-[#8d9aa3]" />
      <div className="flex flex-col gap-3">
        <SideButton label="New Screen" icon={<ScreenIcon />} />
        <SideButton label="Reports" icon={<ReportIcon />} />
        <SideButton label="Menu" icon={<MenuIcon />} />
        <SideButton label="Settings" icon={<SettingsIcon />} split />
      </div>
      <hr className="-ml-1 -mr-1 mb-[14px] mt-[13px] border-[#8d9aa3]" />
      <SideButton label="Documents" icon={<DocumentIcon />} split />
      <div className="mt-auto"><SideButton label="Switch User" icon={<SwitchUserIcon />} /></div>
    </aside>
  );
}

export default function App() {
  return (
    <div className="relative flex h-screen flex-col overflow-hidden border-b border-l border-[#555] bg-[#fcfefc] font-['DejaVu_Sans_Condensed','Noto_Sans',sans-serif] text-[#0c0c0c]">
      <TitleBar />
      <MenuBar />
      <Toolbar />
      <div className="flex min-h-0 grow">
        <div className="w-[9px] shrink-0 bg-[#eeefee] pt-[30px]">
          <button type="button" aria-label="Show navigator" className="flex h-8 w-[9px] items-center justify-center rounded-l-[3px] border border-r-0 border-[#777978]">
            <svg viewBox="0 0 6 9" className="h-[9px] w-1.5"><path d="M0.500 0.500v8l5-4z" fill="#fff" stroke="#888" /></svg>
          </button>
        </div>
        <ElementsPanel />
        <div className="flex min-w-0 grow flex-col">
          <Breadcrumb />
          <Canvas />
          <TablePanel />
        </div>
        <VisionSidebar />
      </div>
      <svg viewBox="0 0 12 19" className="absolute left-[881px] top-[595px] h-[19px] w-3" aria-hidden="true">
        <path d="M1 1v14l3.200-3 2.300 5.500 2.200-1L6.500 11.200H11z" fill="#fff" stroke="#111" />
      </svg>
    </div>
  );
}
